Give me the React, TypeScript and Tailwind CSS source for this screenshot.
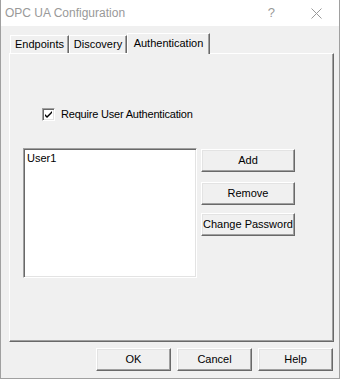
import { useState } from "react";

const raised =
	"border border-t-white border-l-white border-r-[#696969] border-b-[#696969] shadow-[inset_-1px_-1px_0_#a0a0a0,inset_1px_1px_0_#e3e3e3]";
const sunken =
	"border border-t-[#a0a0a0] border-l-[#a0a0a0] border-r-white border-b-white shadow-[inset_1px_1px_0_#696969,inset_-1px_-1px_0_#e3e3e3]";

const WinButton = ({ label, className = "" }: { label: string; className?: string }) => (
	<button
		className={`h-[23px] bg-[#f0f0f0] text-black text-[11px] leading-none flex items-center justify-center ${raised} ${className}`}
	>
		{label}
	</button>
);

const Tab = ({
	label,
	width,
	selected = false,
}: {
	label: string;
	width: string;
	selected?: boolean;
}) =>
	selected ? (
		<div
			className={`${width} h-[21px] -mb-px relative z-10 bg-[#f0f0f0] border-t border-l border-r border-t-white border-l-white border-r-[#696969] shadow-[inset_-1px_0_0_#a0a0a0] flex items-start justify-center pt-[3px] text-[11px] leading-[13px]`}
		>
			{label}
		</div>
	) : (
		<div
			className={`${width} h-[18px] bg-[#f0f0f0] border-t border-l border-r border-t-white border-l-white border-r-[#696969] shadow-[inset_-1px_0_0_#a0a0a0] flex items-start justify-center pt-[2px] text-[11px] leading-[13px]`}
		>
			{label}
		</div>
	);

export default function App() {
	const [requireAuth, setRequireAuth] = useState(true);

	return (
		<div
			className="w-[340px] h-[379px] bg-[#f0f0f0] border-l border-r border-b border-[#a0a0a0] flex flex-col text-black"
			style={{ fontFamily: '"Liberation Sans", Arial, sans-serif' }}
		>
			{/* title bar */}
			<div className="h-[26px] bg-white flex items-center shrink-0">
				<span className="ml-[4px] text-[12px] text-[#999999]">OPC UA Configuration</span>
				<span className="ml-auto mr-[36px] text-[13px] text-[#999999]">?</span>
				<svg width="11" height="11" viewBox="0 0 11 11" className="mr-[17px]">
					<path d="M0.5 0.5 L10.5 10.5 M10.5 0.5 L0.5 10.5" stroke="#999999" strokeWidth="1" />
				</svg>
			</div>

			{/* tabs */}
			<div className="flex items-end pl-[9px] mt-[7px] h-[20px]">
				<Tab label="Endpoints" width="w-[59px]" />
				<Tab label="Discovery" width="w-[58px]" />
				<Tab label="Authentication" width="w-[83px]" selected />
			</div>

			{/* tab panel */}
			<div className="ml-[8px] w-[325px] h-[289px] border border-t-white border-l-white border-r-[#696969] border-b-[#696969] shadow-[inset_-1px_-1px_0_#a0a0a0] flex flex-col">
				<label className="flex items-center mt-[52px] ml-[32px] gap-[6px] text-[11px] tracking-[-0.2px]">
					<span
						onClick={() => setRequireAuth(!requireAuth)}
						className={`w-[13px] h-[13px] bg-white flex items-center justify-center ${sunken}`}
					>
						{requireAuth && (
							<svg width="7" height="7" viewBox="0 0 7 7">
								<path d="M0 3 L2 5 L7 0 V2 L2 7 L0 5 Z" fill="#000" />
							</svg>
						)}
					</span>
					Require User Authentication
				</label>

				<div className="flex mt-[25px] ml-[13px] gap-[4px]">
					<div className={`w-[174px] h-[130px] bg-white px-[3px] py-[1px] text-[11px] ${sunken}`}>
						User1
					</div>
					<div className="flex flex-col mt-px">
						<WinButton label="Add" className="w-[94px]" />
						<WinButton label="Remove" className="w-[94px] mt-[10px]" />
						<WinButton label="Change Password" className="w-[94px] mt-[8px]" />
					</div>
				</div>
			</div>

			{/* bottom buttons */}
			<div className="flex justify-end gap-[6px] mt-[6px] mr-[6px]">
				<WinButton label="OK" className="w-[75px]" />
				<WinButton label="Cancel" className="w-[75px]" />
				<WinButton label="Help" className="w-[75px]" />
			</div>
		</div>
	);
}
